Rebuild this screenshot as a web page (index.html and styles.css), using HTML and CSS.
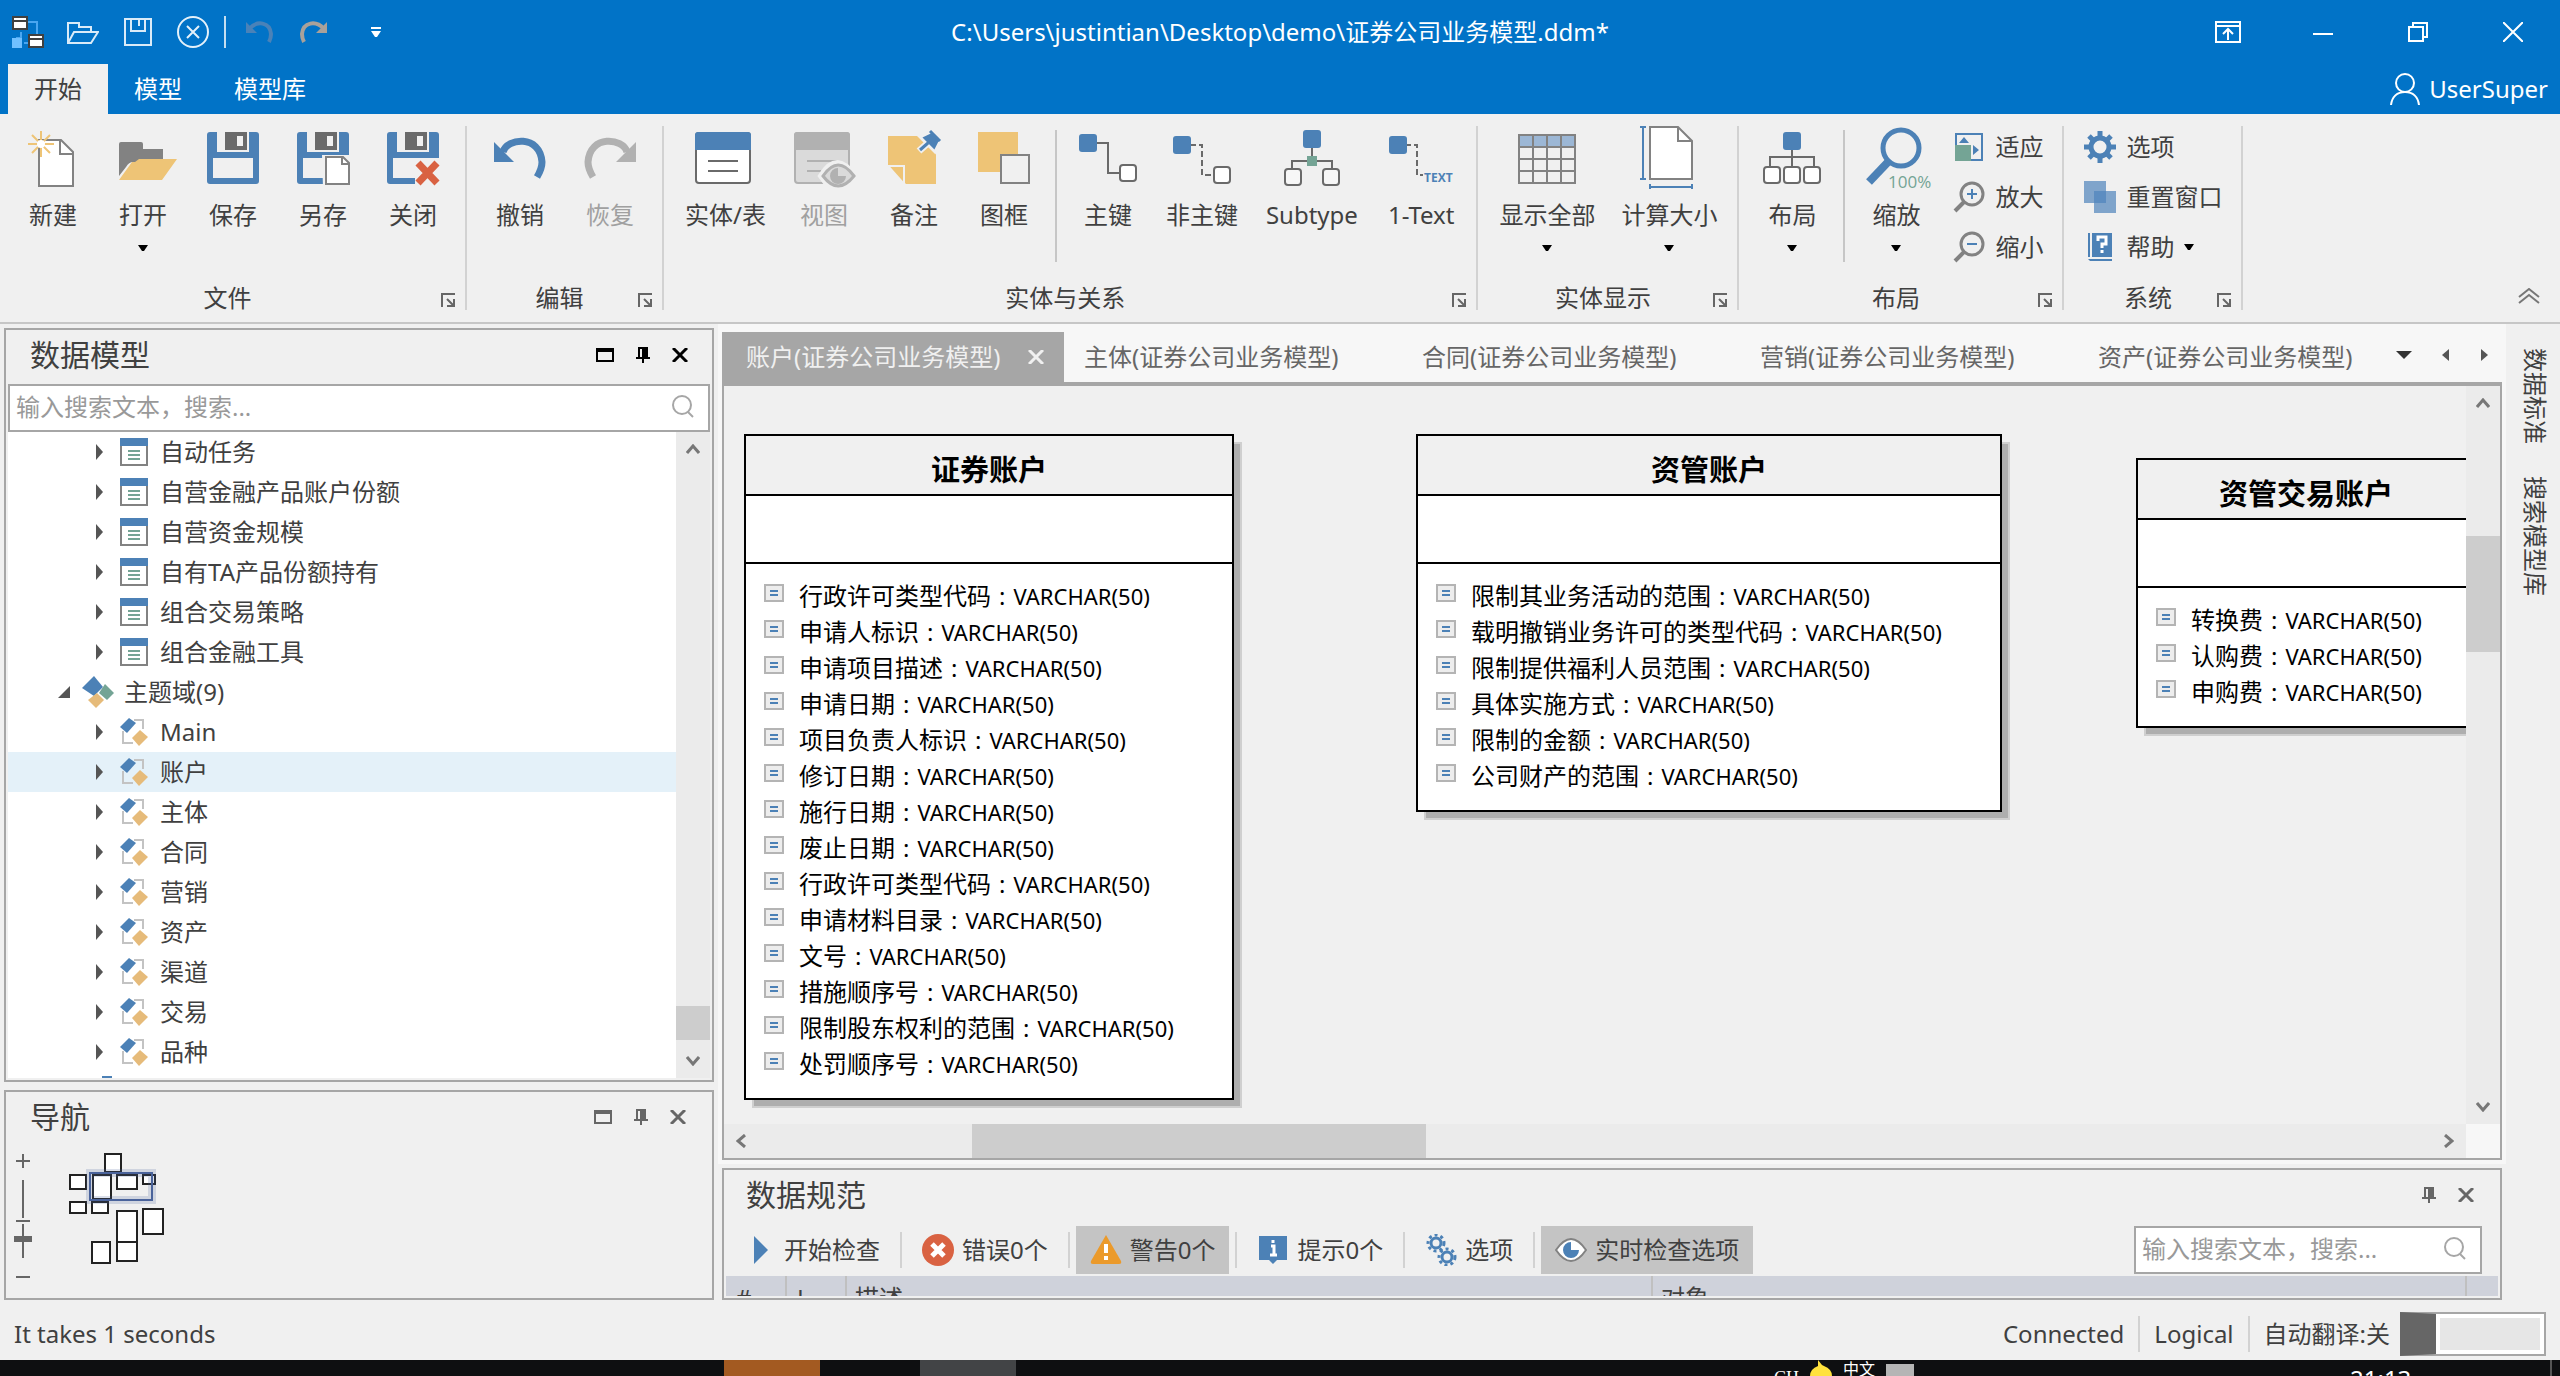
FILE: index.html
```html
<!DOCTYPE html>
<html lang="zh-CN">
<head>
    <meta charset="UTF-8">
    <title>证券公司业务模型.ddm</title>
    <link rel="stylesheet" href="styles.css">
</head>
<body>

    <!-- Shared icons -->
    <svg class="defs" aria-hidden="true">
        <symbol id="i-table" viewBox="0 0 28 28">
            <rect x="1" y="1" width="26" height="26" fill="#fff" stroke="#828282" stroke-width="2"/>
            <rect width="28" height="8" fill="#4c81b6"/>
            <path d="M8 13h12M8 17h12M8 21h12" stroke="#74a495" stroke-width="2"/>
        </symbol>
        <symbol id="i-subject" viewBox="0 0 28 28">
            <path d="M14 2h9v9M3 13v12h10" fill="none" stroke="#c3c3c3" stroke-width="2"/>
            <path d="M9 0l7 5-9 10-7-6z" fill="#4c81b6"/>
            <path d="M20 12l8 7-9 9-7-8z" fill="#e6bb7a"/>
        </symbol>
        <symbol id="i-subjects" viewBox="0 0 32 32">
            <path d="M12 0l9 11-9 9-12-8z" fill="#4c81b6"/>
            <path d="M23 8l9 9-7 7-8-7z" fill="#74a495"/>
            <path d="M15 17l7 7-8 8-8-8z" fill="#e6bb7a"/>
        </symbol>
        <symbol id="i-tri" viewBox="0 0 8 16"><path d="M0 0l7 8-7 8z" fill="#555"/></symbol>
        <symbol id="i-field" viewBox="0 0 20 18">
            <rect x="1" y="1" width="18" height="16" fill="#ededed" stroke="#b4b4b4" stroke-width="2"/>
            <path d="M6 7h8M6 11h8" stroke="#4c81b6" stroke-width="2"/>
        </symbol>
        <symbol id="i-launch" viewBox="0 0 14 14">
            <path d="M1 14V1h13" fill="none" stroke="#666" stroke-width="2"/>
            <path d="M6 6l6 6M13 6v7H6" fill="none" stroke="#666" stroke-width="2"/>
        </symbol>
        <symbol id="i-down" viewBox="0 0 10 6"><path d="M0 0h10L6 6H4z" fill="#000"/></symbol>
        <symbol id="i-search" viewBox="0 0 24 24">
            <circle cx="11" cy="10" r="9" fill="none" stroke="#a6a6a6" stroke-width="2"/>
            <path d="M17 17l5 5" stroke="#a6a6a6" stroke-width="2"/>
        </symbol>
        <symbol id="i-max" viewBox="0 0 18 14">
            <path d="M1 1h16v12H1z" fill="none" stroke="currentColor" stroke-width="2"/><path d="M0 0h18v4H0z" fill="currentColor"/>
        </symbol>
        <symbol id="i-pin" viewBox="0 0 14 16">
            <path d="M2 0h10v10h2v2H8v4H6v-4H0v-2h2zM4 2v8h2V2z" fill="currentColor" fill-rule="evenodd"/>
        </symbol>
        <symbol id="i-x" viewBox="0 0 16 14"><path d="M1 0l14 14M15 0L1 14" stroke="currentColor" stroke-width="3"/></symbol>
        <symbol id="i-chev" viewBox="0 0 14 10"><path d="M1 9l6-7 6 7" fill="none" stroke="#777" stroke-width="3"/></symbol>
        <symbol id="i-gear" viewBox="0 0 32 32">
            <circle cx="16" cy="16" r="9" fill="none" stroke="#4c81b6" stroke-width="5"/>
            <path d="M16 0v7M16 25v7M0 16h7M25 16h7M5 5l5 5M22 22l5 5M27 5l-5 5M10 22l-5 5" stroke="#4c81b6" stroke-width="5"/>
        </symbol>
    </svg>

    <!-- Title bar -->
    <header class="titlebar">
        <div class="quick">
            <svg class="ic32" viewBox="0 0 32 32">
                <path d="M16 6h9v12M9 16v6H5v4M12 27h6" fill="none" stroke="#4aa6f0" stroke-width="2"/>
                <rect x="1" y="1" width="14" height="12" fill="#fff" stroke="#404040" stroke-width="2"/><path d="M1 5h14" stroke="#404040" stroke-width="2"/>
                <rect x="17" y="19" width="14" height="12" fill="#fff" stroke="#404040" stroke-width="2"/><path d="M17 23h14" stroke="#404040" stroke-width="2"/>
                <rect y="22" width="10" height="10" fill="#70c0ff"/>
            </svg>
            <button aria-label="打开"><svg class="ic32" viewBox="0 0 32 32"><path d="M1 27V7h11v4h12v5M1 27l6-11h24l-7 11z" fill="none" stroke="#d9ebf8" stroke-width="2"/></svg></button>
            <button aria-label="保存"><svg class="ic32" viewBox="0 0 32 32"><path d="M3 3h26v26H3zM9 3v12h14V3M17 3v7" fill="none" stroke="#d9ebf8" stroke-width="2"/></svg></button>
            <button aria-label="关闭"><svg class="ic32" viewBox="0 0 32 32"><circle cx="16" cy="16" r="15" fill="none" stroke="#e4f1fa" stroke-width="2"/><path d="M10 10l12 12M22 10L10 22" stroke="#e4f1fa" stroke-width="2"/></svg></button>
            <span class="quick-sep"></span>
            <button aria-label="撤销"><svg class="ic32" viewBox="0 0 32 32"><path d="M8 13C16 4 29 6 30 18c0 4-1 6-2 8" fill="none" stroke="#4a82b8" stroke-width="4"/><path d="M5 6l11 11H5z" fill="#4a82b8"/></svg></button>
            <button aria-label="恢复"><svg class="ic32" viewBox="0 0 32 32"><path d="M28 13C20 4 7 6 6 18c0 4 1 6 2 8" fill="none" stroke="#a9a19a" stroke-width="4"/><path d="M31 6L20 17h11z" fill="#a9a19a"/></svg></button>
            <button aria-label="自定义" class="quick-more"><svg width="10" height="10" viewBox="0 0 10 10"><path d="M0 0h10v2H0zM0 4h10L6 10H4z" fill="#fff"/></svg></button>
        </div>
        <h1>C:\Users\justintian\Desktop\demo\证券公司业务模型.ddm*</h1>
        <div class="win-buttons">
            <button aria-label="折叠功能区"><svg width="26" height="22" viewBox="0 0 26 22"><path d="M1 1h24v20H1zM1 5h24M13 19V9M8 13l5-5 5 5" fill="none" stroke="#fff" stroke-width="2"/></svg></button>
            <button aria-label="最小化"><svg width="20" height="22" viewBox="0 0 20 22"><path d="M0 13h20" stroke="#fff" stroke-width="2"/></svg></button>
            <button aria-label="还原"><svg width="20" height="20" viewBox="0 0 20 20"><path d="M1 5h14v14H1zM5 5V1h14v14h-4" fill="none" stroke="#fff" stroke-width="2"/></svg></button>
            <button aria-label="关闭窗口"><svg width="20" height="20" viewBox="0 0 20 20"><path d="M0 0l20 20M20 0L0 20" stroke="#fff" stroke-width="2"/></svg></button>
        </div>
    </header>

    <nav class="ribbon-tabs">
        <button class="ribbon-tab active">开始</button>
        <button class="ribbon-tab">模型</button>
        <button class="ribbon-tab">模型库</button>
        <div class="user">
            <svg width="32" height="32" viewBox="0 0 32 32"><circle cx="16" cy="10" r="9" fill="none" stroke="#fff" stroke-width="2"/><path d="M2 32c1-8 6-13 14-13s13 5 14 13" fill="none" stroke="#fff" stroke-width="2"/></svg>
            <span>UserSuper</span>
        </div>
    </nav>

    <!-- Ribbon -->
    <section class="ribbon">
        <div class="group">
            <div class="tools">
                <button class="big">
                    <svg viewBox="0 0 64 64"><path d="M18 14h22l12 12v34H18z" fill="#fff" stroke="#828282" stroke-width="2"/><path d="M39 14v14h13" fill="none" stroke="#828282" stroke-width="2"/><path d="M20 5v26M7 18h26M11 9l18 18M29 9L11 27" stroke="#eec476" stroke-width="2"/><circle cx="20" cy="18" r="4" fill="#fff"/></svg>
                    <span>新建</span>
                </button>
                <button class="big">
                    <svg viewBox="0 0 64 64"><path d="M8 50V18q0-2 2-2h20q2 0 2 2v5h20v13H22q-4 0-7 5z" fill="#828282"/><path d="M8 54l13-18h3l4-3h38L51 54z" fill="#eec476"/></svg>
                    <span>打开</span>
                    <svg class="caret"><use href="#i-down"/></svg>
                </button>
                <button class="big">
                    <svg viewBox="0 0 64 64"><path d="M9 6h46q3 0 3 3v46q0 3-3 3H9q-3 0-3-3V9q0-3 3-3z" fill="#4c81b6"/><path d="M16 6h32v20H16z" fill="#f0f0f0"/><path d="M24 6h22v18H24zM36 10v10h6V10z" fill="#6a6a6a" fill-rule="evenodd"/><rect x="12" y="32" width="40" height="20" fill="#f0f0f0"/></svg>
                    <span>保存</span>
                </button>
                <button class="big">
                    <svg viewBox="0 0 64 64"><path d="M9 6h46q3 0 3 3v46q0 3-3 3H9q-3 0-3-3V9q0-3 3-3z" fill="#4c81b6"/><path d="M16 6h32v20H16z" fill="#f0f0f0"/><path d="M24 6h22v18H24zM36 10v10h6V10z" fill="#6a6a6a" fill-rule="evenodd"/><path d="M12 32h22v20H12zM31 29h33v33H32z" fill="#f0f0f0"/><path d="M35 31h17l6 6v21H35z" fill="#fff" stroke="#828282" stroke-width="2"/><path d="M51 31v7h7" fill="none" stroke="#828282" stroke-width="2"/></svg>
                    <span>另存</span>
                </button>
                <button class="big">
                    <svg viewBox="0 0 64 64"><path d="M9 6h46q3 0 3 3v46q0 3-3 3H9q-3 0-3-3V9q0-3 3-3z" fill="#4c81b6"/><path d="M16 6h32v20H16z" fill="#f0f0f0"/><path d="M24 6h22v18H24zM36 10v10h6V10z" fill="#6a6a6a" fill-rule="evenodd"/><path d="M12 32h42v20H12zM34 32h26v30H34z" fill="#f0f0f0"/><path d="M37 37l19 20M56 37L37 57" stroke="#d96242" stroke-width="7"/></svg>
                    <span>关闭</span>
                </button>
            </div>
            <div class="group-foot"><span>文件</span><button aria-label="文件选项"><svg width="14" height="14"><use href="#i-launch"/></svg></button></div>
        </div>

        <div class="group">
            <div class="tools">
                <button class="big">
                    <svg viewBox="0 0 64 64"><path d="M15 26C19 12 52 8 54 36c0 6-2 10-5 15" fill="none" stroke="#4c81b6" stroke-width="7"/><path d="M6 16l20 20H6z" fill="#4c81b6"/></svg>
                    <span>撤销</span>
                </button>
                <button class="big" disabled>
                    <svg viewBox="0 0 64 64"><path d="M49 26C45 12 12 8 10 36c0 6 2 10 5 15" fill="none" stroke="#b1b1b1" stroke-width="7"/><path d="M58 16L38 36h20z" fill="#b1b1b1"/></svg>
                    <span>恢复</span>
                </button>
            </div>
            <div class="group-foot"><span>编辑</span><button aria-label="编辑选项"><svg width="14" height="14"><use href="#i-launch"/></svg></button></div>
        </div>

        <div class="group">
            <div class="tools">
                <button class="big">
                    <svg viewBox="0 0 64 64"><rect x="3" y="7" width="54" height="50" rx="3" fill="#fff" stroke="#6a6a6a" stroke-width="2"/><path d="M2 24V9q0-3 3-3h50q3 0 3 3v15z" fill="#4c81b6"/><path d="M15 35h30M15 45h30" stroke="#6a6a6a" stroke-width="2"/></svg>
                    <span>实体/表</span>
                </button>
                <button class="big" disabled>
                    <svg viewBox="0 0 64 64"><rect x="3" y="7" width="54" height="50" rx="3" fill="#dadada" stroke="#b1b1b1" stroke-width="2"/><path d="M2 24V9q0-3 3-3h50q3 0 3 3v15z" fill="#b1b1b1"/><path d="M15 35h30M15 45h14" stroke="#b1b1b1" stroke-width="2"/><path d="M29 50q16-26 33 0-17 25-33 0z" fill="#dadada" stroke="#f0f0f0" stroke-width="6"/><path d="M31 50q15-22 31 0-16 20-31 0z" fill="#dadada" stroke="#b1b1b1" stroke-width="3"/><path d="M46 42v8h8a8 8 0 1 1-8-8z" fill="#b1b1b1"/></svg>
                    <span>视图</span>
                </button>
                <button class="big">
                    <svg viewBox="0 0 64 64"><path d="M6 10h48v48H24L6 40z" fill="#eec476"/><path d="M6 40h16v18z" fill="#eec476" stroke="#f0f0f0" stroke-width="2"/><path d="M47 4l11 11M50 8l-9 3 11 11 3-9zM46 17l-9 8" stroke="#f0f0f0" stroke-width="7" fill="#f0f0f0"/><path d="M48 5l10 10M51 8l-8 4 9 9 4-8zM46 17l-8 7" stroke="#4c81b6" stroke-width="3" fill="#4c81b6"/></svg>
                    <span>备注</span>
                </button>
                <button class="big">
                    <svg viewBox="0 0 64 64"><rect x="6" y="6" width="40" height="40" fill="#eec476"/><rect x="29" y="29" width="28" height="28" fill="#f0f0f0" stroke="#828282" stroke-width="2"/></svg>
                    <span>图框</span>
                </button>
                <span class="tool-sep"></span>
                <button class="big">
                    <svg viewBox="0 0 64 64"><path d="M20 17h12v30h12" fill="none" stroke="#6a6a6a" stroke-width="2"/><rect x="3" y="8" width="18" height="18" rx="3" fill="#4c81b6"/><rect x="44" y="39" width="16" height="16" rx="3" fill="#fff" stroke="#6a6a6a" stroke-width="2"/></svg>
                    <span>主键</span>
                </button>
                <button class="big">
                    <svg viewBox="0 0 64 64"><path d="M20 19h12v30h12" fill="none" stroke="#6a6a6a" stroke-width="2" stroke-dasharray="6 3"/><rect x="3" y="10" width="18" height="18" rx="3" fill="#4c81b6"/><rect x="44" y="41" width="16" height="16" rx="3" fill="#fff" stroke="#6a6a6a" stroke-width="2"/></svg>
                    <span>非主键</span>
                </button>
                <button class="big latin">
                    <svg viewBox="0 0 64 64"><path d="M32 20v15M12 44v-9h40v9" fill="none" stroke="#6a6a6a" stroke-width="2"/><rect x="23" y="4" width="18" height="18" rx="3" fill="#4c81b6"/><rect x="27" y="30" width="10" height="10" fill="#74a495"/><rect x="5" y="43" width="16" height="16" rx="3" fill="#f7f7f7" stroke="#6a6a6a" stroke-width="2"/><rect x="43" y="43" width="16" height="16" rx="3" fill="#f7f7f7" stroke="#6a6a6a" stroke-width="2"/></svg>
                    <span>Subtype</span>
                </button>
                <button class="big latin">
                    <svg viewBox="0 0 64 64"><path d="M16 19h12v30h6" fill="none" stroke="#6a6a6a" stroke-width="2" stroke-dasharray="6 3"/><rect y="10" width="18" height="18" rx="3" fill="#4c81b6"/><text class="icon-text" x="35" y="56">TEXT</text></svg>
                    <span>1-Text</span>
                </button>
            </div>
            <div class="group-foot"><span>实体与关系</span><button aria-label="实体与关系选项"><svg width="14" height="14"><use href="#i-launch"/></svg></button></div>
        </div>

        <div class="group">
            <div class="tools">
                <button class="big">
                    <svg viewBox="0 0 64 64"><rect x="3" y="9" width="58" height="12" fill="#9cb7d5"/><path d="M4 9h56v48H4zM4 21h56M4 33h56M4 45h56M18 9v48M32 9v48M46 9v48" fill="none" stroke="#828282" stroke-width="2"/></svg>
                    <span>显示全部</span>
                    <svg class="caret"><use href="#i-down"/></svg>
                </button>
                <button class="big">
                    <svg viewBox="0 0 64 64"><path d="M13 1h28l14 14v38H13z" fill="#fff" stroke="#828282" stroke-width="2"/><path d="M41 1v14h14" fill="none" stroke="#828282" stroke-width="2"/><path d="M3 1h6M3 53h6M6 1v52M13 58v5M55 58v5M13 61h42" stroke="#4c81b6" stroke-width="2"/></svg>
                    <span>计算大小</span>
                    <svg class="caret"><use href="#i-down"/></svg>
                </button>
            </div>
            <div class="group-foot"><span>实体显示</span><button aria-label="实体显示选项"><svg width="14" height="14"><use href="#i-launch"/></svg></button></div>
        </div>

        <div class="group">
            <div class="tools">
                <button class="big">
                    <svg viewBox="0 0 64 64"><path d="M32 22v19M10 41V31h44v10" fill="none" stroke="#6a6a6a" stroke-width="2"/><rect x="23" y="6" width="18" height="18" rx="3" fill="#4c81b6"/><g fill="#fff" stroke="#6a6a6a" stroke-width="2"><rect x="4" y="41" width="16" height="16" rx="3"/><rect x="24" y="41" width="16" height="16" rx="3"/><rect x="44" y="41" width="16" height="16" rx="3"/></g></svg>
                    <span>布局</span>
                    <svg class="caret"><use href="#i-down"/></svg>
                </button>
                <span class="tool-sep"></span>
                <button class="big">
                    <svg viewBox="0 0 64 64"><circle cx="37" cy="22" r="18" fill="none" stroke="#4c81b6" stroke-width="5"/><path d="M24 36L5 56" stroke="#4c81b6" stroke-width="8"/><text class="icon-num" x="24" y="62">100%</text></svg>
                    <span>缩放</span>
                    <svg class="caret"><use href="#i-down"/></svg>
                </button>
                <div class="stack">
                    <button class="small"><svg viewBox="0 0 32 32"><path d="M3 16V3h26v26H18" fill="none" stroke="#4c81b6" stroke-width="2"/><path d="M11 6l5 6H6zM26 19l-6 5V14z" fill="#4c81b6"/><rect x="2" y="14" width="16" height="16" fill="#74a495"/></svg><span>适应</span></button>
                    <button class="small"><svg viewBox="0 0 32 32"><circle cx="19" cy="13" r="11" fill="none" stroke="#828282" stroke-width="3"/><path d="M11 21L2 30" stroke="#828282" stroke-width="4"/><path d="M19 8v10M14 13h10" stroke="#4c81b6" stroke-width="2"/></svg><span>放大</span></button>
                    <button class="small"><svg viewBox="0 0 32 32"><circle cx="19" cy="13" r="11" fill="none" stroke="#828282" stroke-width="3"/><path d="M11 21L2 30" stroke="#828282" stroke-width="4"/><path d="M14 13h10" stroke="#4c81b6" stroke-width="2"/></svg><span>缩小</span></button>
                </div>
            </div>
            <div class="group-foot"><span>布局</span><button aria-label="布局选项"><svg width="14" height="14"><use href="#i-launch"/></svg></button></div>
        </div>

        <div class="group">
            <div class="tools">
                <div class="stack">
                    <button class="small"><svg><use href="#i-gear"/></svg><span>选项</span></button>
                    <button class="small"><svg viewBox="0 0 32 32"><rect width="22" height="22" fill="#7fa4cb"/><rect x="10" y="10" width="22" height="22" fill="#7fa4cb"/><rect x="10" y="10" width="12" height="12" fill="#5c8dc1"/></svg><span>重置窗口</span></button>
                    <button class="small"><svg viewBox="0 0 32 32"><path d="M4 2h2v24H4zM8 2h20v24H8zM4 28h24v2H6z" fill="#4c81b6"/><path d="M14 10V6h8v7h-4v4M18 19v3" fill="none" stroke="#fff" stroke-width="3"/></svg><span>帮助</span><svg class="caret"><use href="#i-down"/></svg></button>
                </div>
            </div>
            <div class="group-foot"><span>系统</span><button aria-label="系统选项"><svg width="14" height="14"><use href="#i-launch"/></svg></button></div>
        </div>

        <button class="collapse" aria-label="折叠"><svg width="22" height="16" viewBox="0 0 22 16"><path d="M1 9l10-8 10 8M1 15l10-8 10 8" fill="none" stroke="#777" stroke-width="2"/></svg></button>
    </section>

    <main class="workspace">

        <!-- Left side: model tree and navigator -->
        <aside class="sidebar">
            <section class="panel tree-panel">
                <div class="panel-head focused">
                    <h2>数据模型</h2>
                    <button aria-label="最大化"><svg width="18" height="14"><use href="#i-max"/></svg></button>
                    <button aria-label="固定"><svg width="14" height="16"><use href="#i-pin"/></svg></button>
                    <button aria-label="关闭"><svg width="16" height="14"><use href="#i-x"/></svg></button>
                </div>
                <div class="search">
                    <input type="text" aria-label="搜索模型" placeholder="输入搜索文本，搜索...">
                    <svg width="24" height="24"><use href="#i-search"/></svg>
                </div>
                <div class="tree-body">
                    <ul class="tree">
                        <li><svg class="tri"><use href="#i-tri"/></svg><svg class="node"><use href="#i-table"/></svg>自动任务</li>
                        <li><svg class="tri"><use href="#i-tri"/></svg><svg class="node"><use href="#i-table"/></svg>自营金融产品账户份额</li>
                        <li><svg class="tri"><use href="#i-tri"/></svg><svg class="node"><use href="#i-table"/></svg>自营资金规模</li>
                        <li><svg class="tri"><use href="#i-tri"/></svg><svg class="node"><use href="#i-table"/></svg>自有TA产品份额持有</li>
                        <li><svg class="tri"><use href="#i-tri"/></svg><svg class="node"><use href="#i-table"/></svg>组合交易策略</li>
                        <li><svg class="tri"><use href="#i-tri"/></svg><svg class="node"><use href="#i-table"/></svg>组合金融工具</li>
                        <li class="parent"><svg class="tri-open" viewBox="0 0 12 12"><path d="M12 0v12H0z" fill="#555"/></svg><svg class="node-lg"><use href="#i-subjects"/></svg>主题域(9)</li>
                        <li><svg class="tri"><use href="#i-tri"/></svg><svg class="node"><use href="#i-subject"/></svg>Main</li>
                        <li class="selected"><svg class="tri"><use href="#i-tri"/></svg><svg class="node"><use href="#i-subject"/></svg>账户</li>
                        <li><svg class="tri"><use href="#i-tri"/></svg><svg class="node"><use href="#i-subject"/></svg>主体</li>
                        <li><svg class="tri"><use href="#i-tri"/></svg><svg class="node"><use href="#i-subject"/></svg>合同</li>
                        <li><svg class="tri"><use href="#i-tri"/></svg><svg class="node"><use href="#i-subject"/></svg>营销</li>
                        <li><svg class="tri"><use href="#i-tri"/></svg><svg class="node"><use href="#i-subject"/></svg>资产</li>
                        <li><svg class="tri"><use href="#i-tri"/></svg><svg class="node"><use href="#i-subject"/></svg>渠道</li>
                        <li><svg class="tri"><use href="#i-tri"/></svg><svg class="node"><use href="#i-subject"/></svg>交易</li>
                        <li><svg class="tri"><use href="#i-tri"/></svg><svg class="node"><use href="#i-subject"/></svg>品种</li>
                        <li class="parent next"><svg class="node-lg" viewBox="0 0 32 32"><path d="M8 0h10v12H8z" fill="#4c81b6"/></svg></li>
                    </ul>
                    <div class="vscroll">
                        <svg width="14" height="10"><use href="#i-chev"/></svg>
                        <div class="thumb tree-thumb"></div>
                        <svg class="flip" width="14" height="10"><use href="#i-chev"/></svg>
                    </div>
                </div>
            </section>

            <section class="panel nav-panel">
                <div class="panel-head">
                    <h2>导航</h2>
                    <button aria-label="最大化"><svg width="18" height="14"><use href="#i-max"/></svg></button>
                    <button aria-label="固定"><svg width="14" height="16"><use href="#i-pin"/></svg></button>
                    <button aria-label="关闭"><svg width="16" height="14"><use href="#i-x"/></svg></button>
                </div>
                <div class="navigator">
                    <div class="zoom">
                        <button aria-label="放大"><svg width="14" height="14" viewBox="0 0 14 14"><path d="M7 0v14M0 7h14" stroke="#666" stroke-width="2"/></svg></button>
                        <input type="range" aria-label="缩放" min="0" max="100" value="22">
                        <button aria-label="缩小"><svg width="14" height="14" viewBox="0 0 14 14"><path d="M0 7h14" stroke="#666" stroke-width="2"/></svg></button>
                    </div>
                    <svg class="minimap" width="112" height="120" viewBox="0 0 112 120">
                        <g fill="#fff" stroke="#222" stroke-width="2">
                            <rect x="45" y="8" width="16" height="18"/>
                            <rect x="10" y="29" width="16" height="14"/>
                            <rect x="33" y="29" width="18" height="24"/>
                            <rect x="57" y="29" width="20" height="14"/>
                            <rect x="83" y="29" width="12" height="9"/>
                            <rect x="10" y="56" width="16" height="11"/>
                            <rect x="32" y="56" width="16" height="11"/>
                            <rect x="57" y="65" width="20" height="31"/>
                            <rect x="83" y="63" width="20" height="25"/>
                            <rect x="32" y="96" width="18" height="21"/>
                            <rect x="57" y="96" width="20" height="19"/>
                        </g>
                        <rect x="30" y="27" width="62" height="27" fill="none" stroke="#4a639b" stroke-width="8" opacity="0.2"/>
                        <rect x="30" y="27" width="62" height="27" fill="none" stroke="#4a639b" stroke-width="2"/>
                    </svg>
                </div>
            </section>
        </aside>

        <!-- Diagram documents -->
        <div class="center">
            <section class="docs">
                <div class="doc-tabs">
                    <button class="doc-tab active">账户(证券公司业务模型)<svg width="16" height="14"><use href="#i-x"/></svg></button>
                    <button class="doc-tab">主体(证券公司业务模型)</button>
                    <button class="doc-tab">合同(证券公司业务模型)</button>
                    <button class="doc-tab">营销(证券公司业务模型)</button>
                    <button class="doc-tab last">资产(证券公司业务模型)</button>
                    <div class="doc-nav">
                        <button aria-label="列表"><svg width="16" height="8" viewBox="0 0 16 8"><path d="M0 0h16L8 8z" fill="#333"/></svg></button>
                        <button aria-label="向左"><svg width="8" height="12" viewBox="0 0 8 12"><path d="M7 0v12L0 6z" fill="#555"/></svg></button>
                        <button aria-label="向右"><svg width="8" height="12" viewBox="0 0 8 12"><path d="M1 0v12l7-6z" fill="#555"/></svg></button>
                    </div>
                </div>
                <div class="doc-frame">
                    <div class="canvas">
                        <article class="entity securities">
                            <h3>证券账户</h3>
                            <div class="keys"></div>
                            <ul>
                                <li><svg><use href="#i-field"/></svg>行政许可类型代码<span class="colon">:</span><span class="type">VARCHAR(50)</span></li>
                                <li><svg><use href="#i-field"/></svg>申请人标识<span class="colon">:</span><span class="type">VARCHAR(50)</span></li>
                                <li><svg><use href="#i-field"/></svg>申请项目描述<span class="colon">:</span><span class="type">VARCHAR(50)</span></li>
                                <li><svg><use href="#i-field"/></svg>申请日期<span class="colon">:</span><span class="type">VARCHAR(50)</span></li>
                                <li><svg><use href="#i-field"/></svg>项目负责人标识<span class="colon">:</span><span class="type">VARCHAR(50)</span></li>
                                <li><svg><use href="#i-field"/></svg>修订日期<span class="colon">:</span><span class="type">VARCHAR(50)</span></li>
                                <li><svg><use href="#i-field"/></svg>施行日期<span class="colon">:</span><span class="type">VARCHAR(50)</span></li>
                                <li><svg><use href="#i-field"/></svg>废止日期<span class="colon">:</span><span class="type">VARCHAR(50)</span></li>
                                <li><svg><use href="#i-field"/></svg>行政许可类型代码<span class="colon">:</span><span class="type">VARCHAR(50)</span></li>
                                <li><svg><use href="#i-field"/></svg>申请材料目录<span class="colon">:</span><span class="type">VARCHAR(50)</span></li>
                                <li><svg><use href="#i-field"/></svg>文号<span class="colon">:</span><span class="type">VARCHAR(50)</span></li>
                                <li><svg><use href="#i-field"/></svg>措施顺序号<span class="colon">:</span><span class="type">VARCHAR(50)</span></li>
                                <li><svg><use href="#i-field"/></svg>限制股东权利的范围<span class="colon">:</span><span class="type">VARCHAR(50)</span></li>
                                <li><svg><use href="#i-field"/></svg>处罚顺序号<span class="colon">:</span><span class="type">VARCHAR(50)</span></li>
                            </ul>
                        </article>
                        <article class="entity asset">
                            <h3>资管账户</h3>
                            <div class="keys"></div>
                            <ul>
                                <li><svg><use href="#i-field"/></svg>限制其业务活动的范围<span class="colon">:</span><span class="type">VARCHAR(50)</span></li>
                                <li><svg><use href="#i-field"/></svg>载明撤销业务许可的类型代码<span class="colon">:</span><span class="type">VARCHAR(50)</span></li>
                                <li><svg><use href="#i-field"/></svg>限制提供福利人员范围<span class="colon">:</span><span class="type">VARCHAR(50)</span></li>
                                <li><svg><use href="#i-field"/></svg>具体实施方式<span class="colon">:</span><span class="type">VARCHAR(50)</span></li>
                                <li><svg><use href="#i-field"/></svg>限制的金额<span class="colon">:</span><span class="type">VARCHAR(50)</span></li>
                                <li><svg><use href="#i-field"/></svg>公司财产的范围<span class="colon">:</span><span class="type">VARCHAR(50)</span></li>
                            </ul>
                        </article>
                        <article class="entity trade">
                            <h3>资管交易账户</h3>
                            <div class="keys"></div>
                            <ul>
                                <li><svg><use href="#i-field"/></svg>转换费<span class="colon">:</span><span class="type">VARCHAR(50)</span></li>
                                <li><svg><use href="#i-field"/></svg>认购费<span class="colon">:</span><span class="type">VARCHAR(50)</span></li>
                                <li><svg><use href="#i-field"/></svg>申购费<span class="colon">:</span><span class="type">VARCHAR(50)</span></li>
                            </ul>
                        </article>
                    </div>
                    <div class="vscroll">
                        <svg width="14" height="10"><use href="#i-chev"/></svg>
                        <div class="thumb canvas-vthumb"></div>
                        <svg class="flip" width="14" height="10"><use href="#i-chev"/></svg>
                    </div>
                    <div class="hscroll">
                        <svg width="10" height="14" viewBox="0 0 10 14"><path d="M9 1L2 7l7 6" fill="none" stroke="#777" stroke-width="3"/></svg>
                        <div class="thumb canvas-hthumb"></div>
                        <svg width="10" height="14" viewBox="0 0 10 14"><path d="M1 1l7 6-7 6" fill="none" stroke="#777" stroke-width="3"/></svg>
                    </div>
                </div>
            </section>

            <section class="panel check-panel">
                <div class="panel-head">
                    <h2>数据规范</h2>
                    <button aria-label="固定"><svg width="14" height="16"><use href="#i-pin"/></svg></button>
                    <button aria-label="关闭"><svg width="16" height="14"><use href="#i-x"/></svg></button>
                </div>
                <div class="toolbar">
                    <button><svg viewBox="0 0 32 32"><path d="M10 2l14 14-14 14z" fill="#4c81b6"/></svg>开始检查</button>
                    <span class="bar-sep"></span>
                    <button><svg viewBox="0 0 32 32"><circle cx="16" cy="16" r="16" fill="#d96242"/><path d="M10 10l12 12M22 10L10 22" stroke="#fff" stroke-width="5"/></svg>错误0个</button>
                    <span class="bar-sep"></span>
                    <button class="on"><svg viewBox="0 0 32 32"><path d="M16 1l15 26q1 3-2 3H3q-3 0-2-3z" fill="#eb9a2b"/><path d="M16 10v9M16 22v4" stroke="#fff" stroke-width="4"/></svg>警告0个</button>
                    <span class="bar-sep"></span>
                    <button><svg viewBox="0 0 32 32"><path d="M2 2h28v24H20l-4 4-4-4H2z" fill="#4c81b6"/><path d="M16 6v3M14 12h3v9M13 21h7" fill="none" stroke="#fff" stroke-width="3"/></svg>提示0个</button>
                    <span class="bar-sep"></span>
                    <button><svg viewBox="0 0 32 32"><g fill="none" stroke="#4c81b6"><circle cx="11" cy="9" r="5" stroke-width="3"/><circle cx="11" cy="9" r="8" stroke-width="3" stroke-dasharray="3 3"/><circle cx="22" cy="23" r="5" stroke-width="3"/><circle cx="22" cy="23" r="8" stroke-width="3" stroke-dasharray="3 3"/></g></svg>选项</button>
                    <span class="bar-sep"></span>
                    <button class="on"><svg viewBox="0 0 32 32"><path d="M1 16Q16-6 31 16 16 38 1 16z" fill="#fff" stroke="#828282" stroke-width="2"/><path d="M16 8v8h8a8 8 0 1 1-8-8z" fill="#4c81b6"/></svg>实时检查选项</button>
                    <div class="search">
                        <input type="text" aria-label="搜索检查结果" placeholder="输入搜索文本，搜索...">
                        <svg width="24" height="24"><use href="#i-search"/></svg>
                    </div>
                </div>
                <div class="results">
                    <table>
                        <thead>
                            <tr><th class="c-num">#</th><th class="c-level">L</th><th class="c-desc">描述</th><th>对象</th><th class="c-end"></th></tr>
                        </thead>
                    </table>
                </div>
            </section>
        </div>

        <div class="side-tabs">
            <button>数据标准</button>
            <button>搜索模型库</button>
        </div>
    </main>

    <footer class="status">
        <span class="message">It takes 1 seconds</span>
        <span class="cell">Connected</span>
        <span class="cell">Logical</span>
        <label for="translate">自动翻译:关</label>
        <input type="checkbox" id="translate">
    </footer>

    <div class="taskbar">
        <span class="task start"></span>
        <span class="task running"></span>
        <span class="task window"></span>
        <div class="tray">
            <span class="lang">CH</span>
            <svg width="22" height="16" viewBox="0 0 22 16"><path d="M8 0l4 5 2 1q8 3 8 10H0q0-7 8-10z" fill="#ffe23d"/></svg>
            <span class="ime">中文</span>
            <svg width="28" height="16" viewBox="0 0 28 16"><path d="M0 4h28v12H0z" fill="#b5b5b5"/></svg>
        </div>
        <span class="clock">21:13</span>
        <span class="desktop"></span>
    </div>

</body>
</html>
```
FILE: styles.css
```css
* {
    box-sizing: border-box;
}

body {
    margin: 0;
    height: 100vh;
    display: flex;
    flex-direction: column;
    overflow: hidden;
    background: #f0f0f0;
    color: #404040;
    font-family: "Noto Sans", "Noto Sans CJK SC", sans-serif;
    font-size: 24px;
    line-height: 36px;
}

button {
    margin: 0;
    padding: 0;
    border: none;
    background: none;
    color: inherit;
    font: inherit;
    white-space: nowrap;
}

button:disabled {
    color: #a0a0a0;
}

svg {
    display: block;
    flex: none;
}

h1, h2, h3, ul {
    margin: 0;
    padding: 0;
    font-weight: normal;
}

.defs {
    position: absolute;
    width: 0;
    height: 0;
}

/* Title bar */
.titlebar {
    display: grid;
    grid-template-columns: 1fr auto 1fr;
    align-items: center;
    height: 64px;
    background: #0173c7;
    color: #fff;
}

.titlebar h1 {
    font-size: 24px;
}

.quick {
    display: flex;
    align-items: center;
    gap: 23px;
    padding-left: 12px;
}

.ic32 {
    width: 32px;
    height: 32px;
}

.quick-sep {
    width: 2px;
    height: 32px;
    margin: 0 -8px;
    background: #c5def0;
}

.quick-more {
    padding: 0 20px;
}

.win-buttons {
    display: flex;
    justify-content: flex-end;
}

.win-buttons button {
    width: 95px;
    height: 64px;
    display: flex;
    align-items: center;
    justify-content: center;
}

/* Ribbon */
.ribbon-tabs {
    display: flex;
    height: 50px;
    padding: 0 12px 0 8px;
    background: #0173c7;
    color: #fff;
}

.ribbon-tab {
    padding: 0 26px;
}

.ribbon-tab.active {
    background: #f0f0f0;
    color: #404040;
}

.user {
    margin-left: auto;
    display: flex;
    align-items: center;
    gap: 8px;
}

.ribbon {
    display: flex;
    padding: 12px 0;
    border-bottom: 2px solid #c6c6c6;
}

.group {
    display: flex;
    flex-direction: column;
    height: 184px;
    border-right: 2px solid #d2d2d2;
}

.tools {
    flex: 1;
    display: flex;
    padding: 0 7px 0 8px;
}

.big {
    min-width: 90px;
    padding: 0 13px;
    display: flex;
    flex-direction: column;
    align-items: center;
}

.big.latin {
    padding: 0 15px;
}

.big > svg {
    width: 64px;
    height: 64px;
    overflow: visible;
}

.big span {
    margin: 7px 0 12px;
}

.big > .caret,
.caret {
    width: 10px;
    height: 6px;
}

.tool-sep {
    width: 2px;
    height: 132px;
    margin: 4px 6px 0;
    background: #c6c6c6;
}

.icon-text {
    font: bold 12px "Open Sans", sans-serif;
    fill: #4c81b6;
}

.icon-num {
    font: 17px "Open Sans", sans-serif;
    fill: #74a495;
}

.stack {
    display: flex;
    flex-direction: column;
    padding: 0 12px;
}

.small {
    height: 50px;
    padding-bottom: 8px;
    display: flex;
    align-items: center;
    gap: 10px;
}

.small svg {
    width: 32px;
    height: 32px;
}

.small .caret {
    width: 10px;
    height: 6px;
}

.group-foot {
    display: flex;
    align-items: center;
    padding: 0 10px 0 14px;
    line-height: 24px;
}

.group-foot span {
    flex: 1;
    text-align: center;
}

.group-foot button svg {
    margin-top: 4px;
}

.collapse {
    margin-left: auto;
    align-self: flex-end;
    padding: 6px 20px;
}

/* Panels */
.workspace {
    flex: 1;
    min-height: 0;
    display: flex;
}

.panel {
    border: 2px solid #a6a6a6;
    overflow: hidden;
}

.panel-head {
    display: flex;
    align-items: center;
    gap: 22px;
    height: 54px;
    padding: 0 26px 4px 24px;
    color: #666;
}

.panel-head.focused {
    padding: 0 22px 4px;
    color: #000;
}

.panel-head h2 {
    flex: 1;
    font-size: 30px;
    color: #404040;
}

.sidebar {
    width: 714px;
    padding-left: 4px;
    padding-top: 4px;
    display: flex;
    flex-direction: column;
    gap: 8px;
}

.tree-panel {
    flex: 1;
    min-height: 0;
    display: flex;
    flex-direction: column;
    padding: 0 2px 2px;
}

.search {
    display: flex;
    align-items: center;
    height: 48px;
    padding: 0 13px 2px 6px;
    border: 2px solid #a6a6a6;
    background: #fff;
}

.search input {
    flex: 1;
    min-width: 0;
    padding: 0;
    border: none;
    outline: none;
    background: none;
    font: inherit;
}

.search input::placeholder {
    color: #999;
}

.tree-body {
    flex: 1;
    min-height: 0;
    display: flex;
    background: #fff;
    overflow: hidden;
}

.tree {
    flex: 1;
    list-style: none;
}

.tree li {
    display: flex;
    align-items: center;
    height: 40px;
    padding-left: 88px;
}

.tree li.parent {
    padding-left: 50px;
}

.tree li.next {
    padding-left: 86px;
    align-items: flex-start;
    padding-top: 4px;
}

.tree .selected {
    background: #e4f1f9;
}

.tri {
    width: 8px;
    height: 16px;
    margin-right: 16px;
}

.tri-open {
    width: 12px;
    height: 12px;
    margin-right: 12px;
}

.node {
    width: 28px;
    height: 28px;
    margin-right: 12px;
}

.node-lg {
    width: 32px;
    height: 32px;
    margin-right: 10px;
}

.vscroll {
    width: 34px;
    padding: 12px 0;
    display: flex;
    flex-direction: column;
    align-items: center;
    background: #ebebeb;
}

.hscroll {
    height: 34px;
    padding: 0 12px;
    display: flex;
    align-items: center;
    background: #ebebeb;
}

.thumb {
    background: #cdcdcd;
}

.flip {
    transform: scaleY(-1);
}

.tree-thumb {
    width: 34px;
    height: 34px;
    margin-top: auto;
    margin-bottom: 16px;
}

.nav-panel {
    height: 210px;
}

.navigator {
    display: flex;
    gap: 28px;
    padding-left: 8px;
}

.zoom {
    display: flex;
    flex-direction: column;
    align-items: center;
    gap: 12px;
    padding-top: 8px;
}

.zoom input {
    appearance: none;
    writing-mode: vertical-lr;
    direction: rtl;
    width: 18px;
    height: 78px;
    margin: 0;
    background:
        linear-gradient(#666, #666) center 40px / 14px 2px no-repeat,
        linear-gradient(#666 0 38px, transparent 38px 44px, #666 44px) center / 2px 78px no-repeat;
}

.zoom input::-webkit-slider-thumb {
    appearance: none;
    width: 18px;
    height: 6px;
    background: #666;
}

/* Diagram area */
.center {
    flex: 1;
    min-width: 0;
    display: flex;
    flex-direction: column;
    padding-left: 4px;
}

.docs {
    flex: 1;
    min-height: 0;
    display: flex;
    flex-direction: column;
    padding: 8px 4px 4px;
    background: #f7f7f7;
}

.doc-tabs {
    display: flex;
    height: 54px;
    border-bottom: 4px solid #a6a6a6;
    color: #666;
}

.doc-tab {
    flex: none;
    display: flex;
    align-items: center;
    width: 338px;
    padding: 0 20px;
}

.doc-tab.active {
    width: 342px;
    padding-left: 24px;
    justify-content: space-between;
    background: #a6a6a6;
    color: #f0f0f0;
}

.doc-tab.last {
    width: auto;
}

.doc-nav {
    margin-left: auto;
    display: flex;
    align-items: center;
    gap: 30px;
    padding: 0 14px 4px 0;
}

.doc-frame {
    flex: 1;
    min-height: 0;
    display: grid;
    grid-template-columns: minmax(0, 1fr) 34px;
    grid-template-rows: minmax(0, 1fr) 34px;
    border: 2px solid #a6a6a6;
    border-top: none;
}

.canvas {
    position: relative;
    overflow: hidden;
    background: #f0f0f0;
    color: #000;
}

.canvas-vthumb {
    width: 34px;
    height: 116px;
    margin-top: 128px;
    margin-bottom: auto;
}

.canvas-hthumb {
    width: 454px;
    height: 34px;
    margin-left: 226px;
    margin-right: auto;
}

.entity {
    position: absolute;
    border: 2px solid #000;
    background: #fff;
    box-shadow: 8px 8px 0 -2px #aeaeae, 8px 8px 0 0 #cfcfcf;
}

/* diagram positions */
.securities {
    left: 20px;
    top: 48px;
    width: 490px;
}

.asset {
    left: 692px;
    top: 48px;
    width: 586px;
}

.trade {
    left: 1412px;
    top: 72px;
    width: 340px;
}

.entity h3 {
    height: 60px;
    padding-top: 8px;
    border-bottom: 2px solid #000;
    background: #f0f0f0;
    font-size: 29px;
    font-weight: bold;
    line-height: 52px;
    text-align: center;
}

.entity .keys {
    height: 68px;
    border-bottom: 2px solid #000;
}

.entity ul {
    padding: 14px 18px 16px;
    list-style: none;
}

.entity li {
    display: flex;
    white-space: nowrap;
}

.entity li svg {
    width: 20px;
    height: 18px;
    margin: 6px 15px 0 0;
}

.colon {
    margin: 0 8px;
}

.type {
    font-size: 22px;
}

/* Check results */
.check-panel {
    height: 132px;
    margin: 4px 4px 0;
    padding: 0 2px 2px;
}

.check-panel .panel-head {
    padding: 0 24px 4px 20px;
}

.toolbar {
    display: flex;
    align-items: center;
    gap: 6px;
    height: 48px;
    margin: 2px 16px 2px 4px;
}

.toolbar button {
    display: flex;
    align-items: center;
    gap: 8px;
    height: 48px;
    padding: 0 14px;
}

.toolbar button svg {
    width: 32px;
    height: 32px;
}

.toolbar .on {
    background: #c4c4c4;
}

.toolbar .search {
    width: 348px;
    margin-left: auto;
}

.bar-sep {
    width: 2px;
    height: 36px;
    background: #d2d2d2;
}

.results {
    height: 20px;
    overflow: hidden;
}

.results table {
    width: 100%;
    table-layout: fixed;
    border-collapse: collapse;
    background: #cfd2db;
}

.results th {
    padding: 4px 8px;
    border-right: 2px solid #c0c0c0;
    font-weight: normal;
    text-align: left;
}

.results .c-num,
.results .c-level {
    width: 60px;
    padding-left: 10px;
}

.results .c-desc {
    width: 806px;
}

.results .c-end {
    width: 32px;
    border-right: none;
}

.side-tabs {
    width: 54px;
    display: flex;
    flex-direction: column;
    align-items: center;
    gap: 32px;
    padding: 24px 0 0 4px;
}

.side-tabs button {
    writing-mode: vertical-rl;
    text-orientation: sideways;
}

/* Status bar */
.status {
    display: flex;
    align-items: center;
    height: 60px;
    padding: 8px 14px 0;
}

.status .message {
    flex: 1;
}

.status .cell {
    padding: 0 14px;
    border-right: 2px solid #d2d2d2;
}

.status label {
    padding: 0 10px 0 14px;
}

.status input {
    appearance: none;
    width: 146px;
    height: 44px;
    margin: 0;
    border: 2px solid #a6a6a6;
    border-left: 36px solid #666;
    padding: 4px;
    background: #e6e6e6 content-box;
    box-shadow: inset 0 0 0 4px #fff;
}

/* Taskbar */
.taskbar {
    display: flex;
    height: 16px;
    overflow: hidden;
    background: #0e0f11;
    color: #fff;
}

.task {
    width: 96px;
}

.task.start {
    width: 724px;
}

.task.running {
    background: #a35a21;
}

.task.window {
    margin-left: 100px;
    background: #424446;
}

.tray {
    margin-left: auto;
    display: flex;
    gap: 11px;
    font-size: 16px;
}

.lang {
    font-family: "Liberation Serif", serif;
    font-size: 18px;
}

.ime {
    line-height: 18px;
}

.clock {
    width: 200px;
    margin-left: 436px;
    line-height: 38px;
}

.desktop {
    width: 10px;
    border-left: 2px solid #555;
}
```
